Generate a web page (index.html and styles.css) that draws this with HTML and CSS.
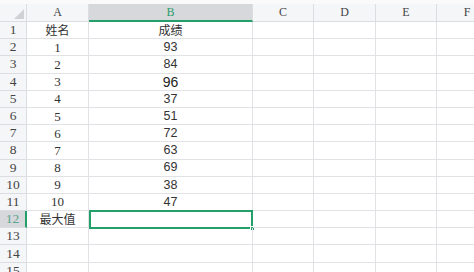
FILE: index.html
```html
<!DOCTYPE html>
<html lang="zh-CN">
<head>
    <meta charset="UTF-8">
    <title>成绩表</title>
    <link rel="stylesheet" href="styles.css">
</head>
<body>
    <div class="sheet">
        <div class="corner"><span class="tri"></span></div>
        <div class="col-head">A</div>
        <div class="col-head active">B</div>
        <div class="col-head">C</div>
        <div class="col-head">D</div>
        <div class="col-head">E</div>
        <div class="col-head">F</div>

        <div class="row-head">1</div><div class="cell cn">姓名</div><div class="cell cn">成绩</div><div class="cell"></div><div class="cell"></div><div class="cell"></div><div class="cell"></div>
        <div class="row-head">2</div><div class="cell">1</div><div class="cell num">93</div><div class="cell"></div><div class="cell"></div><div class="cell"></div><div class="cell"></div>
        <div class="row-head">3</div><div class="cell">2</div><div class="cell num">84</div><div class="cell"></div><div class="cell"></div><div class="cell"></div><div class="cell"></div>
        <div class="row-head">4</div><div class="cell">3</div><div class="cell num big">96</div><div class="cell"></div><div class="cell"></div><div class="cell"></div><div class="cell"></div>
        <div class="row-head">5</div><div class="cell">4</div><div class="cell num">37</div><div class="cell"></div><div class="cell"></div><div class="cell"></div><div class="cell"></div>
        <div class="row-head">6</div><div class="cell">5</div><div class="cell num">51</div><div class="cell"></div><div class="cell"></div><div class="cell"></div><div class="cell"></div>
        <div class="row-head">7</div><div class="cell">6</div><div class="cell num">72</div><div class="cell"></div><div class="cell"></div><div class="cell"></div><div class="cell"></div>
        <div class="row-head">8</div><div class="cell">7</div><div class="cell num">63</div><div class="cell"></div><div class="cell"></div><div class="cell"></div><div class="cell"></div>
        <div class="row-head">9</div><div class="cell">8</div><div class="cell num">69</div><div class="cell"></div><div class="cell"></div><div class="cell"></div><div class="cell"></div>
        <div class="row-head">10</div><div class="cell">9</div><div class="cell num">38</div><div class="cell"></div><div class="cell"></div><div class="cell"></div><div class="cell"></div>
        <div class="row-head">11</div><div class="cell">10</div><div class="cell num">47</div><div class="cell"></div><div class="cell"></div><div class="cell"></div><div class="cell"></div>
        <div class="row-head active">12</div><div class="cell cn">最大值</div><div class="cell selected"><span class="handle"></span></div><div class="cell"></div><div class="cell"></div><div class="cell"></div><div class="cell"></div>
        <div class="row-head">13</div><div class="cell"></div><div class="cell"></div><div class="cell"></div><div class="cell"></div><div class="cell"></div><div class="cell"></div>
        <div class="row-head">14</div><div class="cell"></div><div class="cell"></div><div class="cell"></div><div class="cell"></div><div class="cell"></div><div class="cell"></div>
        <div class="row-head">15</div><div class="cell"></div><div class="cell"></div><div class="cell"></div><div class="cell"></div><div class="cell"></div><div class="cell"></div>
    </div>
</body>
</html>
```

FILE: styles.css
```css
* {
    padding: 0;
    margin: 0;
    box-sizing: border-box;
}
body {
    background-color: #fafafa;
    padding-top: 4px;
    overflow: hidden;
    font-family: "Liberation Serif", "Noto Sans CJK SC", serif;
    color: #333;
}
.sheet {
    display: grid;
    grid-template-columns: 27px 62px 164px 61px 62px 61px 61px;
    grid-template-rows: 18px;
    grid-auto-rows: 17.2px;
    background-color: #fff;
}
.corner,
.col-head,
.row-head {
    background-color: #f5f6f8;
    border-right: 1px solid #dcdde2;
    border-bottom: 1px solid #dcdde2;
    display: flex;
    align-items: center;
    justify-content: center;
    font-size: 12px;
    color: #444;
}
.corner {
    position: relative;
}
.tri {
    position: absolute;
    right: 2px;
    bottom: 2px;
    width: 0;
    height: 0;
    border-left: 10px solid transparent;
    border-bottom: 10px solid #d0d1d4;
}
.col-head.active {
    background-color: #d6d8dc;
    color: #2a9d6c;
    border-bottom: 2px solid #23a06a;
}
.row-head {
    font-size: 13.5px;
}
.row-head.active {
    background-color: #d6d8dc;
    color: #5aa38c;
    border-right: 2px solid #23a06a;
}
.cell {
    position: relative;
    border-right: 1px solid #e1e2e6;
    border-bottom: 1px solid #e1e2e6;
    display: flex;
    align-items: center;
    justify-content: center;
    font-size: 13px;
    line-height: 1;
    color: #333;
}
.cell.cn {
    font-family: "Noto Sans CJK SC", sans-serif;
    font-size: 12px;
}
.cell.num {
    font-family: "Liberation Sans", Arial, sans-serif;
    font-size: 12.5px;
}
.cell.big {
    font-size: 14px;
    color: #222;
}
.cell.selected {
    border: 2px solid #23a06a;
    margin: -1px 0 -1px 0;
}
.handle {
    position: absolute;
    right: -4px;
    bottom: -4px;
    width: 5px;
    height: 5px;
    background-color: #23a06a;
    border: 1px solid #fff;
}
```
